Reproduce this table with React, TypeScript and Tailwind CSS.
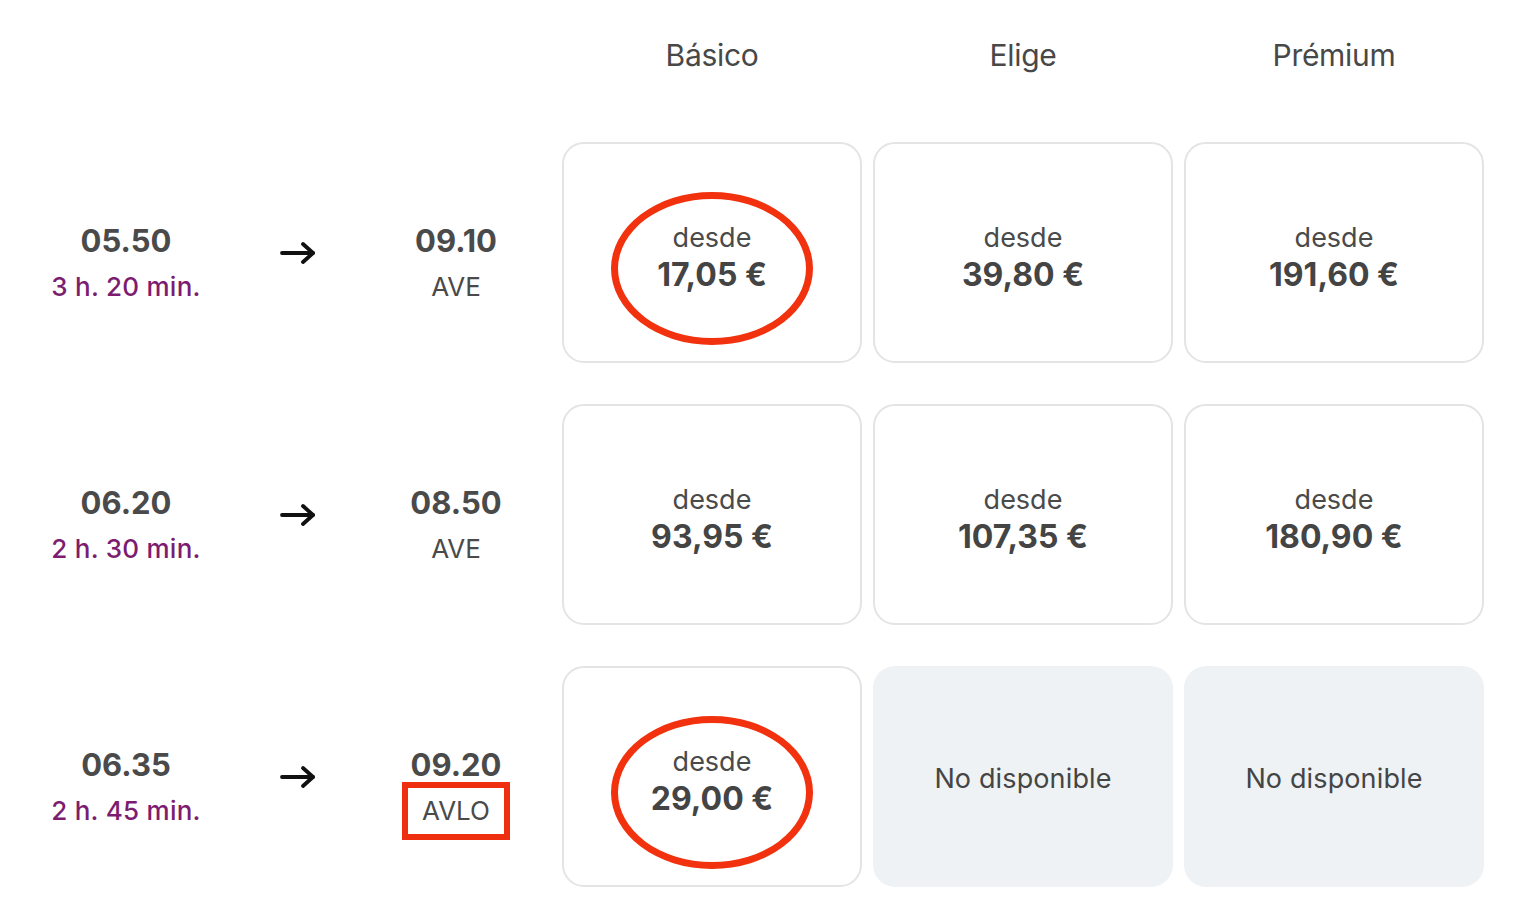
import React from 'react';

// Tabla de tarifas: salida → llegada, con precios por clase

type Fare = { price: string } | null;

type Trip = {
  dep: string;
  dur: string;
  arr: string;
  train: string;
  fares: Fare[];
  circled: boolean;
  boxed: boolean;
};

const TRIPS: Trip[] = [
  { dep: '05.50', dur: '3 h. 20 min.', arr: '09.10', train: 'AVE', fares: [{ price: '17,05 €' }, { price: '39,80 €' }, { price: '191,60 €' }], circled: true, boxed: false },
  { dep: '06.20', dur: '2 h. 30 min.', arr: '08.50', train: 'AVE', fares: [{ price: '93,95 €' }, { price: '107,35 €' }, { price: '180,90 €' }], circled: false, boxed: false },
  { dep: '06.35', dur: '2 h. 45 min.', arr: '09.20', train: 'AVLO', fares: [{ price: '29,00 €' }, null, null], circled: true, boxed: true },
];

const CLASSES = ['Básico', 'Elige', 'Prémium'];

function Arrow() {
  return (
    <svg width="38" height="26" viewBox="0 0 38 26" fill="none" stroke="#111" strokeWidth="3.8" strokeLinecap="round" strokeLinejoin="round">
      <path d="M3 13h31" />
      <path d="M24 4l10 9-10 9" />
    </svg>
  );
}

function FareCard({ fare, circled }: { fare: Fare; circled: boolean }) {
  if (!fare) {
    return (
      <div className="h-[221px] rounded-[22px] bg-[#eef2f5] flex items-center justify-center pt-[6px]">
        <span className="text-[27px] text-[#454545] tracking-[0.005em]">No disponible</span>
      </div>
    );
  }
  return (
    <div className="relative h-[221px] rounded-[22px] border-2 border-[#e4e4e4] bg-white flex flex-col items-center justify-center pt-[8px]">
      <span className="text-[27px] leading-[36px] text-[#4a4a4a]">desde</span>
      <span className="text-[32px] leading-[38px] font-bold text-[#444]">{fare.price}</span>
      {circled && (
        <div className="absolute left-[47px] top-[48px] w-[202px] h-[153px] rounded-[50%] border-[7px] border-[#f2310f]" />
      )}
    </div>
  );
}

export default function App() {
  return (
    <div className="w-[1536px] h-[921px] bg-white overflow-hidden" style={{ fontFamily: 'Inter, "Liberation Sans", sans-serif' }}>
      {/* cabecera de clases */}
      <div className="flex h-[110px]">
        <div className="w-[562px]" />
        <div className="grid grid-cols-3 gap-[11px] w-[922px]">
          {CLASSES.map((c) => (
            <div key={c} className="flex items-center justify-center text-[30px] text-[#484848] tracking-[-0.01em]">
              {c}
            </div>
          ))}
        </div>
      </div>

      <div className="flex flex-col gap-[41px] mt-[32px]">
        {TRIPS.map((t) => (
          <div key={t.dep} className="flex">
            <div className="w-[562px] flex items-center">
              <div className="w-[252px] flex flex-col items-center pt-[24px]">
                <span className="text-[31px] leading-[44px] font-bold text-[#4a4a4a]">{t.dep}</span>
                <span className="text-[26px] leading-[48px] font-medium text-[#7c1d70] tracking-[0.01em]">{t.dur}</span>
              </div>
              <div className="w-[92px] flex justify-center">
                <Arrow />
              </div>
              <div className="w-[218px] pl-[6px] flex flex-col items-center pt-[24px]">
                <span className="text-[31px] leading-[44px] font-bold text-[#4a4a4a]">{t.arr}</span>
                <span className="relative text-[26px] leading-[48px] text-[#4a4a4a]">
                  {t.train}
                  {t.boxed && <span className="absolute -left-[20px] -right-[20px] top-[-5px] bottom-[-5px] border-[6px] border-[#ee2f10]" />}
                </span>
              </div>
            </div>
            <div className="grid grid-cols-3 gap-[11px] w-[922px]">
              {t.fares.map((f, i) => (
                <FareCard key={i} fare={f} circled={t.circled && i === 0} />
              ))}
            </div>
          </div>
        ))}
      </div>
    </div>
  );
}
